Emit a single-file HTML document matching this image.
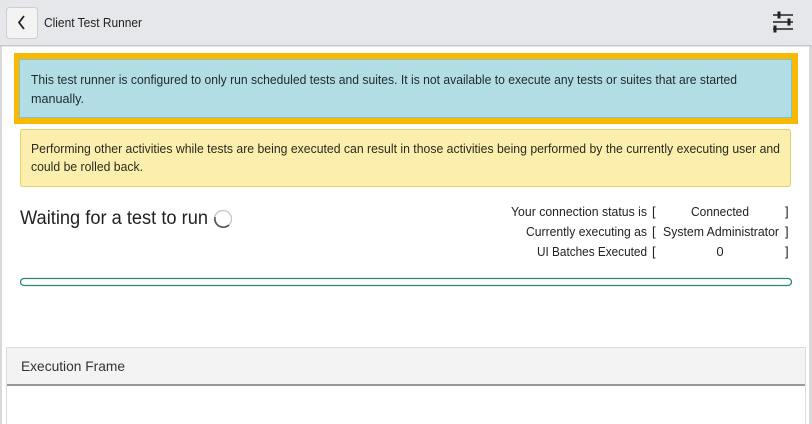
<!DOCTYPE html>
<html><head><meta charset="utf-8"><style>
html,body{margin:0;padding:0;width:812px;height:424px;overflow:hidden;background:#fff}
svg{display:block;font-family:"Liberation Sans",sans-serif}
</style></head><body>
<svg width="812" height="424" viewBox="0 0 812 424" xmlns="http://www.w3.org/2000/svg">
<rect x="0" y="0" width="812" height="424" fill="#fff"/>
<rect x="0" y="0" width="2" height="424" fill="#d9d9d9"/>
<rect x="809" y="0" width="3" height="424" fill="#d9d9d9"/>
<rect x="0" y="0" width="812" height="45" fill="#e6e7ea"/>
<rect x="0" y="45" width="812" height="1.5" fill="#c8c8cc"/>
<rect x="6.5" y="7.5" width="31" height="31" rx="3" fill="#f3f3f4" stroke="#cfcfd2"/>
<path d="M24 16 L19 22.5 L24 29" fill="none" stroke="#222" stroke-width="1.8"/>
<text x="44" y="27" font-size="13" fill="#222" textLength="98" lengthAdjust="spacingAndGlyphs">Client Test Runner</text>
<g stroke="#222" stroke-width="1.6">
<line x1="773" y1="15" x2="793" y2="15"/><line x1="773" y1="22" x2="793" y2="22"/><line x1="773" y1="29" x2="793" y2="29"/>
</g>
<g fill="#222"><rect x="777.5" y="11.5" width="3" height="7"/><rect x="787.5" y="18.5" width="3" height="7"/><rect x="773.5" y="25.5" width="3" height="7"/></g>
<rect x="14" y="53" width="784" height="71" fill="#f9b900"/>
<rect x="19.5" y="59.5" width="772" height="58" fill="#b3dde4" stroke="#7cc3d3"/>
<text x="31" y="84" font-size="13" fill="#1e2a2e" textLength="706" lengthAdjust="spacingAndGlyphs">This test runner is configured to only run scheduled tests and suites. It is not available to execute any tests or suites that are started</text>
<text x="31" y="103" font-size="13" fill="#1e2a2e" textLength="53" lengthAdjust="spacingAndGlyphs">manually.</text>
<rect x="20.5" y="129.5" width="770" height="57" rx="2" fill="#fcefae" stroke="#e2d46a"/>
<text x="31" y="153" font-size="13" fill="#2a2a1e" textLength="749" lengthAdjust="spacingAndGlyphs">Performing other activities while tests are being executed can result in those activities being performed by the currently executing user and</text>
<text x="31" y="171" font-size="13" fill="#2a2a1e" textLength="112" lengthAdjust="spacingAndGlyphs">could be rolled back.</text>
<text x="20" y="224" font-size="19" fill="#222" textLength="188" lengthAdjust="spacingAndGlyphs">Waiting for a test to run</text>
<circle cx="223" cy="219" r="8.5" fill="none" stroke="#c4c4c4" stroke-width="1.3"/>
<path d="M215 217 A8.5 8.5 0 0 0 229 225" fill="none" stroke="#555" stroke-width="1.6"/>
<g font-size="13" fill="#222">
<text x="647" y="216" text-anchor="end" textLength="136" lengthAdjust="spacingAndGlyphs">Your connection status is</text>
<text x="652" y="216">[</text><text x="720" y="216" text-anchor="middle" textLength="58" lengthAdjust="spacingAndGlyphs">Connected</text><text x="785" y="216">]</text>
<text x="647" y="236" text-anchor="end" textLength="121" lengthAdjust="spacingAndGlyphs">Currently executing as</text>
<text x="652" y="236">[</text><text x="721" y="236" text-anchor="middle" textLength="116" lengthAdjust="spacingAndGlyphs">System Administrator</text><text x="785" y="236">]</text>
<text x="647" y="256" text-anchor="end" textLength="110" lengthAdjust="spacingAndGlyphs">UI Batches Executed</text>
<text x="652" y="256">[</text><text x="720" y="256" text-anchor="middle">0</text><text x="785" y="256">]</text>
</g>
<rect x="20.5" y="278.5" width="771" height="7" rx="3.5" fill="#fff" stroke="#2a8577" stroke-width="1.3"/>
<rect x="6.5" y="347.5" width="799" height="80" fill="#fff" stroke="#dcdcdc"/>
<rect x="7" y="348" width="798" height="37" fill="#f3f3f3"/>
<rect x="7" y="384" width="798" height="2" fill="#999"/>
<text x="21" y="371" font-size="14" fill="#333" textLength="104" lengthAdjust="spacingAndGlyphs">Execution Frame</text>
</svg>
</body></html>
